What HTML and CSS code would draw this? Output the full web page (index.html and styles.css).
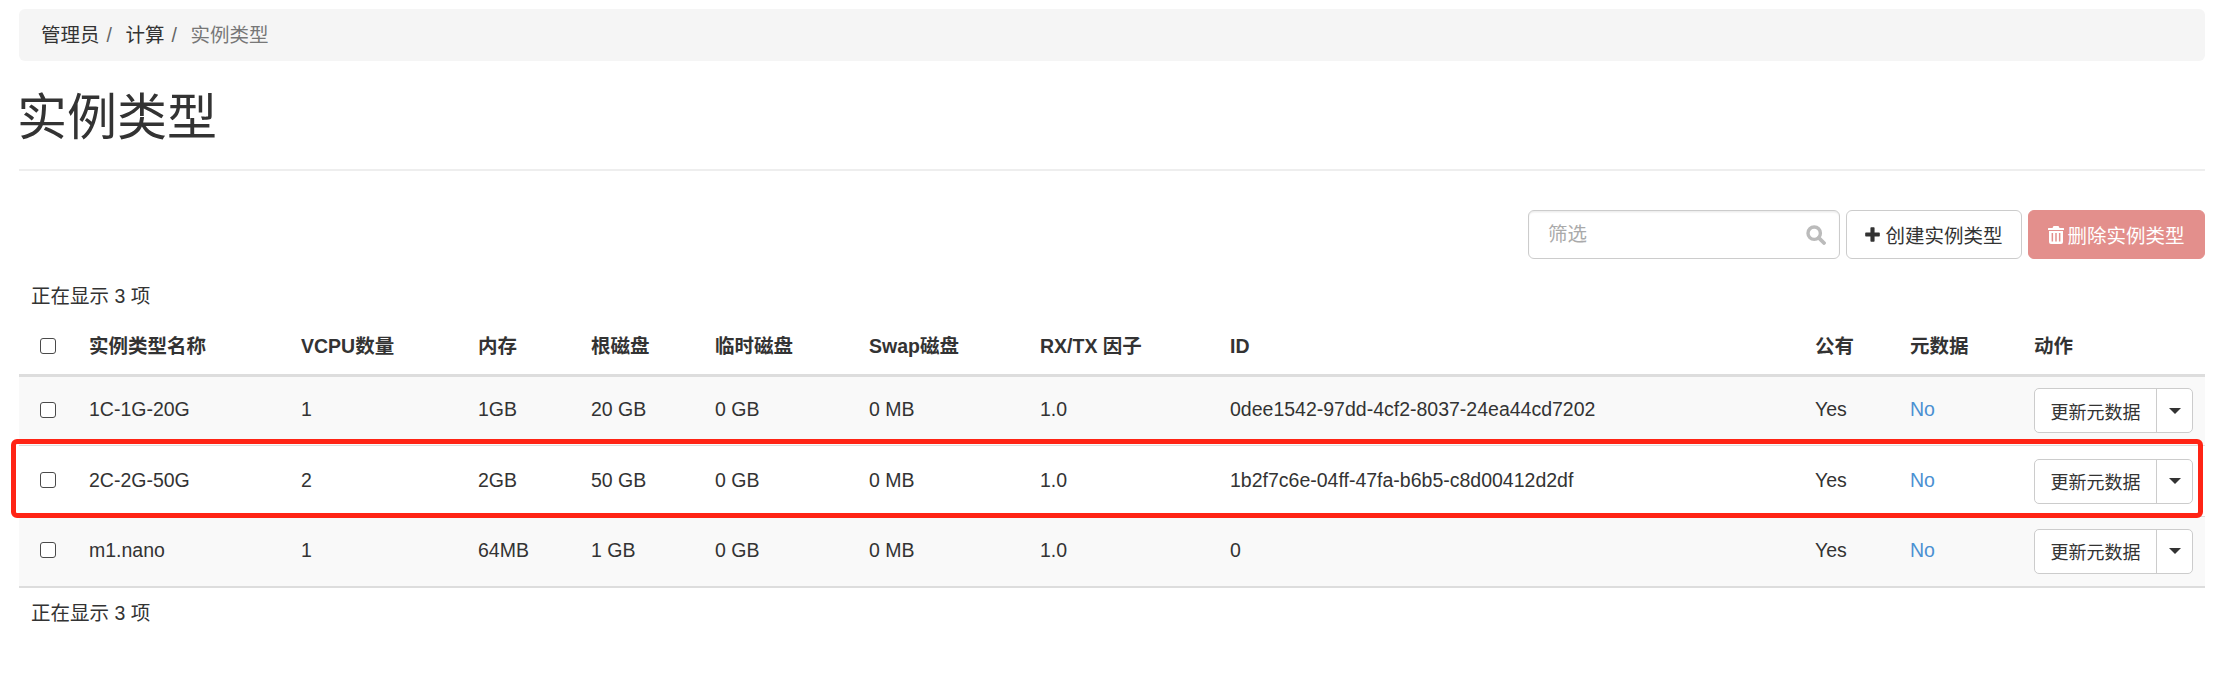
FILE: index.html
```html
<!DOCTYPE html>
<html lang="zh-CN">
<head>
<meta charset="utf-8">
<title>实例类型</title>
<link rel="stylesheet" href="styles.css">
</head>
<body>
<div class="page">
  <ol class="breadcrumb">
    <li><a>管理员</a><span class="sep">/</span></li>
    <li><a>计算</a><span class="sep">/</span></li>
    <li class="active">实例类型</li>
  </ol>
  <div class="page-header"><h1>实例类型</h1></div>
  <div class="toolbar">
    <div class="filter">
      <input type="text" placeholder="筛选">
      <svg class="search" viewBox="0 0 20 20"><circle cx="8.2" cy="8.2" r="6.200" fill="none" stroke="#bbb" stroke-width="3.400"/><path d="M12.800 12.800L18 18" stroke="#bbb" stroke-width="3.800" stroke-linecap="round"/></svg>
    </div>
    <button class="btn"><svg class="ico" viewBox="0 0 16 16"><path d="M5.800 1a.8.8 0 0 1 .8-.8h2.800a.8.8 0 0 1 .8.8v4.800H15a.8.8 0 0 1 .8.8v2.800a.8.8 0 0 1-.8.8h-4.800V15a.8.8 0 0 1-.8.8H6.600a.8.8 0 0 1-.8-.8v-4.800H1a.8.8 0 0 1-.8-.8V6.600a.8.8 0 0 1 .8-.8h4.800z" fill="#333"/></svg>创建实例类型</button>
    <button class="btn btn-danger"><svg class="ico trash" viewBox="0 0 16 18"><path d="M5.500 0h5l1 2H15.500a.5.5 0 0 1 .5.500V4H0V2.500A.5.5 0 0 1 .5 2H4.500zM1 5h14v11a2 2 0 0 1-2 2H3a2 2 0 0 1-2-2zm2.600 2v8.500h1.500V7zm3.650 0v8.500h1.500V7zm3.650 0v8.500h1.500V7z" fill="#fff" fill-rule="evenodd"/></svg>删除实例类型</button>
  </div>
  <div class="count top">正在显示 3 项</div>
  <table class="table">
    <colgroup>
      <col><col><col><col><col><col><col><col><col><col><col><col>
    </colgroup>
    <thead>
      <tr><th class="chk"><input type="checkbox"></th><th>实例类型名称</th><th>VCPU数量</th><th>内存</th><th>根磁盘</th><th>临时磁盘</th><th>Swap磁盘</th><th>RX/TX 因子</th><th>ID</th><th>公有</th><th>元数据</th><th>动作</th></tr>
    </thead>
    <tbody>
      <tr class="odd"><td class="chk"><input type="checkbox"></td><td>1C-1G-20G</td><td>1</td><td>1GB</td><td>20 GB</td><td>0 GB</td><td>0 MB</td><td>1.0</td><td>0dee1542-97dd-4cf2-8037-24ea44cd7202</td><td>Yes</td><td><a class="link">No</a></td><td class="act"><div class="split"><span class="main">更新元数据</span><span class="caret-box"><i class="caret"></i></span></div></td></tr>
      <tr><td class="chk"><input type="checkbox"></td><td>2C-2G-50G</td><td>2</td><td>2GB</td><td>50 GB</td><td>0 GB</td><td>0 MB</td><td>1.0</td><td>1b2f7c6e-04ff-47fa-b6b5-c8d00412d2df</td><td>Yes</td><td><a class="link">No</a></td><td class="act"><div class="split"><span class="main">更新元数据</span><span class="caret-box"><i class="caret"></i></span></div></td></tr>
      <tr class="odd"><td class="chk"><input type="checkbox"></td><td>m1.nano</td><td>1</td><td>64MB</td><td>1 GB</td><td>0 GB</td><td>0 MB</td><td>1.0</td><td>0</td><td>Yes</td><td><a class="link">No</a></td><td class="act"><div class="split"><span class="main">更新元数据</span><span class="caret-box"><i class="caret"></i></span></div></td></tr>
    </tbody>
  </table>
  <div class="count bottom">正在显示 3 项</div>
</div>
<div class="highlight"></div>
</body>
</html>
```

FILE: styles.css
```css
* { box-sizing: border-box; }
html, body { margin: 0; padding: 0; background: #fff; }
body {
  font-family: "Liberation Sans", "Noto Sans CJK SC", sans-serif;
  font-size: 19.5px;
  color: #333;
  height: 694px;
  overflow: hidden;
  position: relative;
}
.page { padding: 9px 10px 0 19px; }

.breadcrumb {
  list-style: none;
  margin: 0;
  padding: 0 22px;
  height: 52px;
  background: #f5f5f5;
  border-radius: 6px;
  display: flex;
  align-items: center;
}
.breadcrumb li { display: flex; align-items: center; line-height: 28px; }
.breadcrumb .sep { color: #666; margin: 0 13.5px 0 7px; }
.breadcrumb .active { color: #777; }

.page-header { height: 110px; border-bottom: 2px solid #eee; }
h1 {
  margin: 0 0 0 -2px;
  padding-top: 27px;
  font-size: 50px;
  line-height: 60px;
  font-weight: 400;
}

.toolbar {
  display: flex;
  justify-content: flex-end;
  gap: 6px;
  margin-top: 39px;
}
.filter { position: relative; width: 312px; }
.filter input {
  display: block;
  width: 100%;
  height: 49px;
  border: 1.4px solid #ccc;
  border-radius: 6px;
  padding: 0 40px 0 19px;
  font: inherit;
  box-shadow: inset 0 1.4px 1.4px rgba(0,0,0,.075);
}
.filter input::placeholder { color: #aaa; opacity: 1; }
.search { position: absolute; right: 14px; top: 15px; width: 20px; height: 20px; }
.btn {
  height: 49px;
  width: 176px;
  border: 1.4px solid #ccc;
  border-radius: 6px;
  background: #fff;
  color: #333;
  font: inherit;
  padding: 0;
  display: flex;
  align-items: center;
  justify-content: center;
  gap: 5px;
}
.ico { width: 15px; height: 15px; }
.ico.trash { width: 16px; height: 18px; }
.btn-danger { background: #e38f8c; border-color: #e38f8c; color: #fff; width: 177px; gap: 3px; }

.count { padding-left: 12px; line-height: 28px; }
.count.top { margin-top: 23px; }
.count.bottom { margin-top: 11px; }

.table { width: 2186px; border-collapse: collapse; table-layout: fixed; margin: 0; }
.table th {
  text-align: left;
  font-weight: 700;
  height: 65px;
  line-height: 27px;
  padding: 0 11px 14px;
  vertical-align: bottom;
  border-bottom: 3px solid #ddd;
}
.table td {
  height: 70.7px;
  padding: 0 11px 2px;
  border-top: 1.4px solid #ddd;
}
.table td.act { padding-bottom: 0; }
.table tbody tr:first-child td { border-top: 0; }
.table tbody { border-bottom: 2px solid #ddd; }
.table tr.odd td { background: #f9f9f9; }
.table th.chk { padding: 0 0 20px 21px; }
.table td.chk { padding: 0 0 2px 21px; }
input[type=checkbox] {
  appearance: none;
  display: block;
  width: 16px;
  height: 16px;
  margin: 0;
  border: 1.6px solid #4a4a4a;
  border-radius: 3px;
  background: #fff;
}
.table col:nth-child(1) { width: 59px; }
.table col:nth-child(2) { width: 212px; }
.table col:nth-child(3) { width: 177px; }
.table col:nth-child(4) { width: 113px; }
.table col:nth-child(5) { width: 124px; }
.table col:nth-child(6) { width: 154px; }
.table col:nth-child(7) { width: 171px; }
.table col:nth-child(8) { width: 190px; }
.table col:nth-child(9) { width: 585px; }
.table col:nth-child(10) { width: 95px; }
.table col:nth-child(11) { width: 124px; }
.table col:nth-child(12) { width: 182px; }
.link { color: #4a90d2; }

.split {
  display: flex;
  width: 159px;
  height: 45px;
  border: 1.4px solid #ccc;
  border-radius: 5px;
  background: #fff;
  font-size: 18px;
}
.split .main { width: 122px; display: flex; align-items: center; justify-content: center; border-right: 1.4px solid #ccc; }
.split .caret-box { flex: 1; display: flex; align-items: center; justify-content: center; }
.caret { width: 0; height: 0; border-left: 6px solid transparent; border-right: 6px solid transparent; border-top: 6px solid #333; }

.highlight {
  position: absolute;
  left: 11px;
  top: 439px;
  width: 2192px;
  height: 79px;
  border: 5px solid #ff2415;
  border-radius: 6px;
}
```
